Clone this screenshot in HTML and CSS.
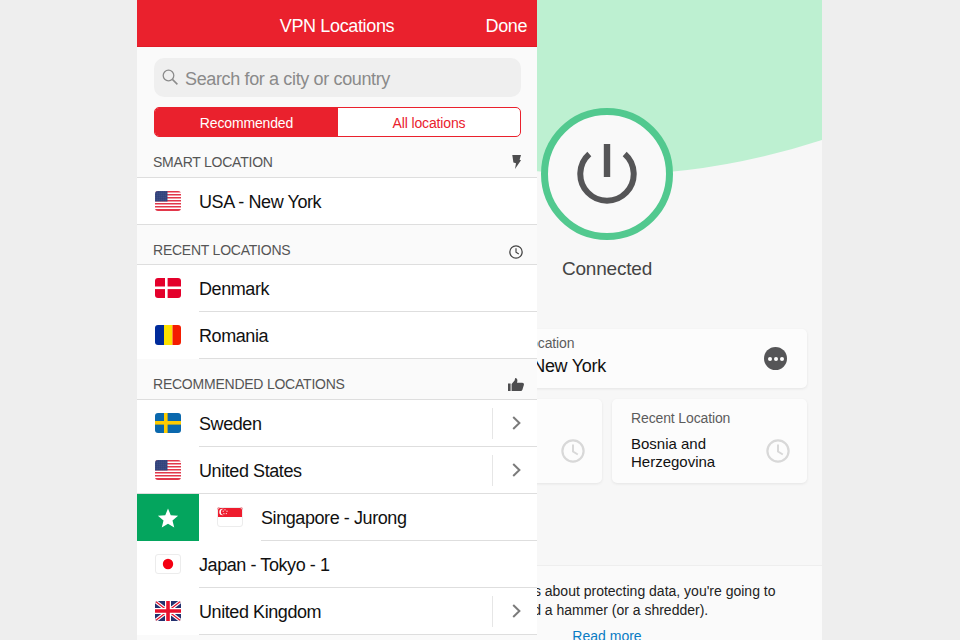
FILE: index.html
```html
<!DOCTYPE html>
<html lang="en">
<head>
<meta charset="utf-8">
<title>VPN Locations</title>
<link rel="stylesheet" href="styles.css">
</head>
<body>
<svg class="sprite" aria-hidden="true">
  <defs>
    <pattern id="stars" width="2" height="2" patternUnits="userSpaceOnUse">
      <rect width="2" height="2" fill="#2c3d78"/>
      <rect x="0.5" y="0.5" width="0.8" height="0.8" fill="#6f7aa6"/>
    </pattern>
    <symbol id="flag-us" viewBox="0 0 26 20">
      <rect width="26" height="20" fill="#fff"/>
      <g fill="#e2374a">
        <rect y="0" width="26" height="1.5"/><rect y="3" width="26" height="1.5"/>
        <rect y="6" width="26" height="1.5"/><rect y="9" width="26" height="1.5"/>
        <rect y="12" width="26" height="1.5"/><rect y="15" width="26" height="1.5"/>
        <rect y="18" width="26" height="2"/>
      </g>
      <rect width="12.5" height="10.5" fill="url(#stars)"/>
    </symbol>
    <symbol id="chevron" viewBox="0 0 9 14">
      <path d="M1.2 1 7.4 7 1.2 13" fill="none" stroke="#7b7b7b" stroke-width="2"/>
    </symbol>
    <symbol id="clock" viewBox="0 0 24 24">
      <circle cx="12" cy="12" r="10.6" fill="none" stroke="currentColor" stroke-width="2.2"/>
      <path d="M12 5.5V12.5L16.8 15.5" fill="none" stroke="currentColor" stroke-width="2"/>
    </symbol>
  </defs>
</svg>

<div class="stage">
  <main class="app">
    <svg class="app-wave" viewBox="0 0 430 180" aria-hidden="true"><path d="M0 0H430V140Q215 210 0 140Z" fill="#bdf0d1"/></svg>
    <section class="status">
      <button class="power" type="button" aria-label="Disconnect">
        <svg class="power-icon" viewBox="0 0 60 60" aria-hidden="true">
          <path d="M12.3 10A26.7 26.7 0 1 0 47.7 10" fill="none" stroke="#555557" stroke-width="6"/>
          <rect x="26.8" y="0" width="6.4" height="33" fill="#555557"/>
        </svg>
      </button>
      <p class="status-text">Connected</p>
    </section>
    <section class="cards">
      <article class="card card-wide">
        <svg class="card-flag" aria-hidden="true"><use href="#flag-us"/></svg>
        <div class="card-body">
          <p class="card-label">Smart Location</p>
          <p class="card-value-large">USA - New York</p>
        </div>
        <span class="more" aria-hidden="true"><i></i><i></i><i></i></span>
      </article>
      <article class="card card-small">
        <div class="card-body">
          <p class="card-label">Recent Location</p>
          <p class="card-value">Denmark</p>
        </div>
        <svg class="card-clock" aria-hidden="true"><use href="#clock"/></svg>
      </article>
      <article class="card card-small">
        <div class="card-body">
          <p class="card-label">Recent Location</p>
          <p class="card-value">Bosnia and<br>Herzegovina</p>
        </div>
        <svg class="card-clock" aria-hidden="true"><use href="#clock"/></svg>
      </article>
    </section>
    <section class="promo">
      <p>If you're serious about protecting data, you're going to<br>need a hammer (or a shredder).</p>
      <a class="promo-link" href="#">Read more</a>
    </section>
  </main>

  <aside class="sheet">
    <header class="sheet-bar">
      <h1 class="sheet-title">VPN Locations</h1>
      <span class="sheet-done">Done</span>
    </header>
    <div class="search">
      <svg class="search-icon" viewBox="0 0 16 16" aria-hidden="true">
        <circle cx="6.5" cy="6.5" r="5.3" fill="none" stroke="#8c8c8c" stroke-width="1.3"/>
        <path d="M10.4 10.4 15.4 15.4" stroke="#8c8c8c" stroke-width="1.5"/>
      </svg>
      <span class="search-text">Search for a city or country</span>
    </div>
    <div class="tabs">
      <span class="tab tab-active">Recommended</span>
      <span class="tab">All locations</span>
    </div>

    <div class="section-head">
      <span>SMART LOCATION</span>
      <svg class="icon-bolt" viewBox="0 0 9 14" aria-hidden="true"><path d="M0.3 0H9L7.6 4.8 9 5.2 3 14 4 8.2 1.4 7.4Z" fill="#4d4d4f"/></svg>
    </div>
    <div class="row row-last">
      <svg class="flag" aria-hidden="true"><use href="#flag-us"/></svg>
      <span class="row-name">USA - New York</span>
    </div>

    <div class="section-head section-head-short">
      <span>RECENT LOCATIONS</span>
      <svg class="icon-clock" aria-hidden="true"><use href="#clock"/></svg>
    </div>
    <div class="row">
      <svg class="flag" viewBox="0 0 26 20" aria-hidden="true"><rect width="26" height="20" fill="#e4002b"/><rect x="10" width="2.6" height="20" fill="#fff"/><rect y="8.5" width="26" height="2.6" fill="#fff"/></svg>
      <span class="row-name">Denmark</span>
    </div>
    <div class="row">
      <svg class="flag" viewBox="0 0 26 20" aria-hidden="true"><rect width="9" height="20" fill="#002b9b"/><rect x="9" width="8.5" height="20" fill="#fde100"/><rect x="17.5" width="8.5" height="20" fill="#f41d00"/></svg>
      <span class="row-name">Romania</span>
    </div>

    <div class="section-head">
      <span>RECOMMENDED LOCATIONS</span>
      <svg class="icon-thumb" viewBox="0 0 16 13" aria-hidden="true"><path d="M0 5.5H2.6V13H0ZM3.6 6 6.6 2.6 7.2 0C9.4 0 9.8 2 9 4.8H14.2C16 4.8 16.2 6.4 15.7 7.6L14.4 11.8C14 12.8 13.4 13 12.6 13H3.6Z" fill="#4d4d4f"/></svg>
    </div>
    <div class="row">
      <svg class="flag" viewBox="0 0 26 20" aria-hidden="true"><rect width="26" height="20" fill="#0a68ad"/><rect x="9" width="3.6" height="20" fill="#fecb00"/><rect y="8" width="26" height="3.6" fill="#fecb00"/></svg>
      <span class="row-name">Sweden</span>
      <span class="row-more"><svg class="chevron" aria-hidden="true"><use href="#chevron"/></svg></span>
    </div>
    <div class="row row-last">
      <svg class="flag" aria-hidden="true"><use href="#flag-us"/></svg>
      <span class="row-name">United States</span>
      <span class="row-more"><svg class="chevron" aria-hidden="true"><use href="#chevron"/></svg></span>
    </div>
    <div class="row-swiped">
      <span class="swipe-action">
        <svg class="swipe-star" viewBox="0 0 24 24" aria-hidden="true"><path d="M12 1.5 15 8.9 23 9.5 16.9 14.6 18.8 22.4 12 18.2 5.2 22.4 7.1 14.6 1 9.5 9 8.9Z" fill="#fff"/></svg>
      </span>
      <div class="row row-shifted">
        <svg class="flag flag-bordered" viewBox="0 0 26 20" aria-hidden="true"><rect width="26" height="20" fill="#fff"/><rect width="26" height="10" fill="#ee1c2e"/><circle cx="5.6" cy="5" r="3.3" fill="#fff"/><circle cx="6.9" cy="5" r="3" fill="#ee1c2e"/><g fill="#fff"><circle cx="8" cy="2.8" r=".6"/><circle cx="10" cy="4.2" r=".6"/><circle cx="9.3" cy="6.6" r=".6"/><circle cx="6.9" cy="6.6" r=".6"/><circle cx="6.2" cy="4.2" r=".6"/></g></svg>
        <span class="row-name">Singapore - Jurong</span>
      </div>
    </div>
    <div class="row">
      <svg class="flag flag-bordered" viewBox="0 0 26 20" aria-hidden="true"><rect width="26" height="20" fill="#fff"/><circle cx="13" cy="10" r="5.2" fill="#f40012"/></svg>
      <span class="row-name">Japan - Tokyo - 1</span>
    </div>
    <div class="row">
      <svg class="flag" viewBox="0 0 26 20" aria-hidden="true"><rect width="26" height="20" fill="#24316f"/><path d="M0 0 26 20M26 0 0 20" stroke="#fff" stroke-width="3.4"/><path d="M0 0 26 20M26 0 0 20" stroke="#e8112d" stroke-width="1.3"/><path d="M13 0V20M0 10H26" stroke="#fff" stroke-width="6"/><path d="M13 0V20M0 10H26" stroke="#e8112d" stroke-width="3.6"/></svg>
      <span class="row-name">United Kingdom</span>
      <span class="row-more"><svg class="chevron" aria-hidden="true"><use href="#chevron"/></svg></span>
    </div>
  </aside>
</div>
</body>
</html>
```

FILE: styles.css
```css
* { box-sizing: border-box; }

html, body {
  margin: 0;
  height: 100%;
}

body {
  background: #eeeeee;
  font-family: "Liberation Sans", Arial, sans-serif;
  color: #111;
}

p, h1 { margin: 0; font-weight: normal; }

.sprite { position: absolute; width: 0; height: 0; }

.stage {
  position: relative;
  width: 960px;
  height: 640px;
  overflow: hidden;
  padding-left: 392px;
}

/* Background app screen */
.app {
  position: relative;
  display: flex;
  flex-direction: column;
  width: 430px;
  height: 640px;
  overflow: hidden;
  background: #f7f7f7;
}

.app-wave {
  position: absolute;
  top: 0;
  left: 0;
  width: 430px;
  height: 180px;
}

.status {
  position: relative;
  display: flex;
  flex-direction: column;
  align-items: center;
  height: 329px;
  padding-top: 108px;
}

.power {
  display: flex;
  align-items: center;
  justify-content: center;
  width: 132px;
  height: 132px;
  padding: 0;
  border: 7px solid #52c98f;
  border-radius: 50%;
  background: #f9f9f9;
}

.power-icon { width: 60px; height: 60px; }

.status-text {
  margin-top: 18px;
  font-size: 19px;
  line-height: 22px;
  letter-spacing: -0.2px;
  color: #444;
}

.cards {
  display: grid;
  grid-template-columns: 195px 195px;
  grid-template-rows: 59px 84px;
  gap: 11px 10px;
  padding: 0 15px;
}

.card {
  display: flex;
  align-items: center;
  border-radius: 5px;
  background: #fcfcfc;
  box-shadow: 0 1px 3px rgba(0, 0, 0, 0.08);
}

.card-wide {
  grid-column: 1 / span 2;
  padding: 0 20px 0 25px;
}

.card-flag { flex: none; width: 26px; height: 20px; margin-right: 24px; }

.card-body { flex: 1; }

.card-wide .card-body { padding-bottom: 5px; }

.card-label {
  font-size: 14px;
  line-height: 16px;
  letter-spacing: -0.13px;
  color: #5c5c5c;
}

.card-value-large {
  margin-top: 5px;
  font-size: 18px;
  line-height: 21px;
  letter-spacing: -0.3px;
  color: #111;
}

.more {
  display: flex;
  align-items: center;
  justify-content: center;
  gap: 2px;
  width: 23px;
  height: 23px;
  border-radius: 50%;
  background: #555557;
}

.more i {
  width: 4px;
  height: 4px;
  border-radius: 50%;
  background: #fff;
}

.card-small {
  padding: 0 17px 0 19px;
  align-items: flex-start;
}

.card-small .card-body { padding-top: 11px; }

.card-value {
  margin-top: 9px;
  font-size: 15px;
  line-height: 18px;
  color: #111;
}

.card-clock {
  flex: none;
  width: 24px;
  height: 24px;
  margin-top: 40px;
  color: #d8d8d8;
}

.promo {
  display: flex;
  flex-direction: column;
  align-items: center;
  margin-top: auto;
  height: 75px;
  padding: 16px 0 0 4px;
  background: #fafafa;
  border-top: 1px solid #eeeeee;
  font-size: 14px;
  line-height: 19px;
  text-align: center;
  color: #222;
}

.promo p { white-space: nowrap; }

.promo-link {
  margin-top: 7px;
  margin-left: -4px;
  color: #0a7cc4;
  text-decoration: none;
}

/* Overlay sheet */
.sheet {
  position: absolute;
  top: 0;
  left: 137px;
  width: 400px;
  height: 640px;
  overflow: hidden;
  background: #fafafa;
}

.sheet-bar {
  display: flex;
  align-items: center;
  justify-content: center;
  position: relative;
  height: 47px;
  background: #ea212d;
  border-bottom: 1px solid #e01b27;
  color: #fff;
}

.sheet-title { font-size: 18px; letter-spacing: -0.36px; margin-top: 6px; }

.sheet-done {
  position: absolute;
  right: 10px;
  top: 16px;
  font-size: 18px;
  letter-spacing: -0.4px;
}

.search {
  display: flex;
  align-items: center;
  height: 39px;
  margin: 11px 16px 10px 17px;
  padding-left: 8px;
  border-radius: 10px;
  background: #efefef;
}

.search-icon { width: 16px; height: 16px; margin-right: 7px; margin-top: -2px; }

.search-text {
  margin-top: 3px;
  font-size: 18px;
  letter-spacing: -0.36px;
  color: #8a8a8a;
}

.tabs {
  display: flex;
  height: 30px;
  margin: 0 16px 0 17px;
  border: 1px solid #ea212d;
  border-radius: 5px;
  overflow: hidden;
  background: #fff;
}

.tab {
  flex: 1;
  display: flex;
  align-items: center;
  justify-content: center;
  padding-top: 2px;
  font-size: 14px;
  letter-spacing: -0.15px;
  color: #ea212d;
}

.tab-active {
  flex: none;
  width: 183px;
  background: #ea212d;
  color: #fff;
}

.section-head {
  display: flex;
  align-items: center;
  justify-content: space-between;
  height: 41px;
  padding: 10px 14px 0 16px;
  background: #fafafa;
  border-bottom: 1px solid #dedede;
  font-size: 14px;
  letter-spacing: -0.23px;
  color: #555;
}

.section-head-short { height: 40px; }

.icon-bolt { width: 9px; height: 14px; margin-right: 2px; }
.icon-clock { width: 14px; height: 14px; margin-top: 5px; color: #444; }
.icon-thumb { width: 16px; height: 13px; margin-right: -1px; }

.row {
  position: relative;
  display: flex;
  align-items: center;
  height: 47px;
  background: #fff;
  padding-left: 18px;
  flex: none;
}

.row::after {
  content: "";
  position: absolute;
  left: 62px;
  right: 0;
  bottom: 0;
  height: 1px;
  background: #dedede;
}

.row-last::after { left: 0; }

.flag {
  flex: none;
  width: 26px;
  height: 20px;
  margin-top: -1px;
  border-radius: 3px;
}

.flag-bordered { outline: 1px solid #ececec; outline-offset: -1px; }

.row-name {
  flex: 1;
  margin: 2px 0 0 18px;
  font-size: 18px;
  letter-spacing: -0.42px;
  color: #111;
}

.row-more {
  display: flex;
  align-items: center;
  justify-content: flex-end;
  width: 45px;
  height: 31px;
  margin-top: -1px;
  padding-right: 16px;
  border-left: 1px solid #e6e6e6;
}

.chevron { width: 9px; height: 14px; }

.row-swiped { display: flex; }

.swipe-action {
  flex: none;
  display: flex;
  align-items: center;
  justify-content: center;
  width: 62px;
  height: 47px;
  background: #04a55e;
}

.swipe-star { width: 22px; height: 22px; }

.row-shifted { flex: 1; }
.row-shifted::after { left: 62px; }
```
